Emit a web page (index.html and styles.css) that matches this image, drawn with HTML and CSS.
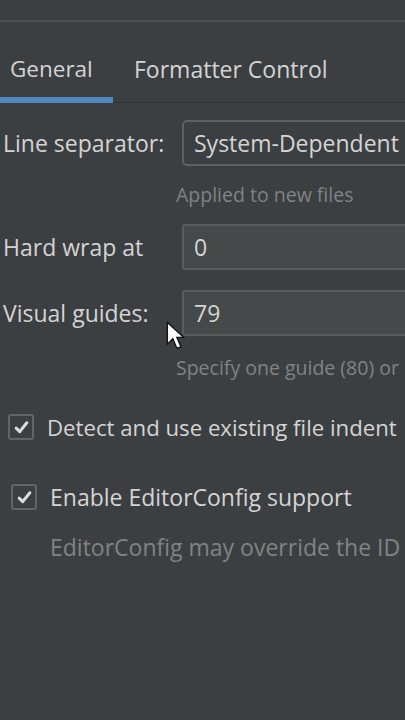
FILE: index.html
```html
<!DOCTYPE html>
<html>
  <head>
    <link rel="stylesheet" href="styles.css">
  </head>
  <body>
    <div class="panel">
      <div class="top-bar"></div>

      <div class="tabs">
        <div class="tab active">General</div>
        <div class="tab">Formatter Control</div>
      </div>

      <div class="form">
        <div class="row row-first">
          <div class="label">Line separator:</div>
          <div class="field combo">System-Dependent</div>
        </div>
        <div class="hint hint-applied">Applied to new files</div>

        <div class="row row-wrap">
          <div class="label">Hard wrap at</div>
          <div class="field">0</div>
        </div>

        <div class="row row-guides">
          <div class="label">Visual guides:</div>
          <div class="field">79</div>
        </div>
        <div class="hint hint-guides">Specify one guide (80) or</div>

        <div class="check check-detect">
          <span class="box">
            <svg viewBox="0 0 16 16" width="19" height="19">
              <path d="M3.5 8.5 L6.5 11.5 L12.5 4" fill="none" stroke="#dcdcdc" stroke-width="2.5" stroke-linecap="round" stroke-linejoin="round"/>
            </svg>
          </span>
          <span class="check-text">Detect and use existing file indent</span>
        </div>

        <div class="check check-editor">
          <span class="box">
            <svg viewBox="0 0 16 16" width="19" height="19">
              <path d="M3.5 8.5 L6.5 11.5 L12.5 4" fill="none" stroke="#dcdcdc" stroke-width="2.5" stroke-linecap="round" stroke-linejoin="round"/>
            </svg>
          </span>
          <span class="check-text">Enable EditorConfig support</span>
        </div>
        <div class="hint hint-editor">EditorConfig may override the ID</div>
      </div>

      <!-- mouse pointer -->
      <svg class="cursor" viewBox="0 0 14 22" width="19" height="30">
        <path d="M1 1 L1 17 L5 13 L8 20 L11 19 L8 12 L13 12 Z" fill="#ffffff" stroke="#111" stroke-width="1"/>
      </svg>
    </div>
  </body>
</html>
```

FILE: styles.css
```css
body {
  margin: 0;
  background: #3c3f41;
  overflow: hidden;
}

.panel {
  position: relative;
  width: 405px;
  height: 720px;
  overflow: hidden;
  font-family: "Open Sans", "Noto Sans", sans-serif;
  color: #d4d4d4;
}

.top-bar {
  height: 20px;
  border-bottom: 2px solid #4c5052;
}

.tabs {
  display: flex;
  height: 80px;
  border-bottom: 1px solid #323436;
}

.tab {
  display: flex;
  align-items: center;
  padding: 18px 20px 0 10px;
  font-size: 22.5px;
  border-bottom: 6px solid transparent;
  margin-bottom: -1px;
}

.tab.active {
  border-bottom-color: #4f87c0;
  width: 113px;
  box-sizing: border-box;
}

.tab + .tab {
  padding-left: 21px;
  font-size: 23px;
}

.form {
  display: flex;
  flex-direction: column;
}

.row {
  display: flex;
  align-items: center;
}

.label {
  width: 179px;
  padding-left: 3px;
  font-size: 23px;
  flex-shrink: 0;
}

.field {
  flex-shrink: 0;
  width: 260px;
  height: 46px;
  box-sizing: border-box;
  border: 2px solid #595c5f;
  border-radius: 3px;
  background: #45494a;
  display: flex;
  align-items: center;
  padding-left: 10px;
  font-size: 23px;
}

.combo {
  background: #3c3f41;
  border-color: #5f6265;
  border-radius: 5px;
}

.row-first {
  margin-top: 17px;
}

.row-wrap {
  margin-top: 17px;
}

.row-guides {
  margin-top: 20px;
}

.hint {
  color: #808385;
  font-size: 19.5px;
  white-space: nowrap;
  padding-left: 176px;
  line-height: 24px;
}

.hint-applied {
  margin-top: 17px;
}

.hint-guides {
  margin-top: 20px;
}

.check {
  display: flex;
  align-items: center;
  white-space: nowrap;
  font-size: 23px;
  height: 26px;
}

.check-detect {
  margin-top: 34px;
  padding-left: 8px;
  font-size: 22.2px;
}

.check-editor {
  margin-top: 44px;
  padding-left: 11px;
}

.box {
  width: 26px;
  height: 26px;
  box-sizing: border-box;
  border: 2px solid #626568;
  border-radius: 3px;
  display: flex;
  align-items: center;
  justify-content: center;
  margin-right: 13px;
  flex-shrink: 0;
}

.hint-editor {
  padding-left: 50px;
  font-size: 23px;
  line-height: 28px;
  margin-top: 23px;
}

.cursor {
  position: absolute;
  left: 166px;
  top: 321px;
}
```
